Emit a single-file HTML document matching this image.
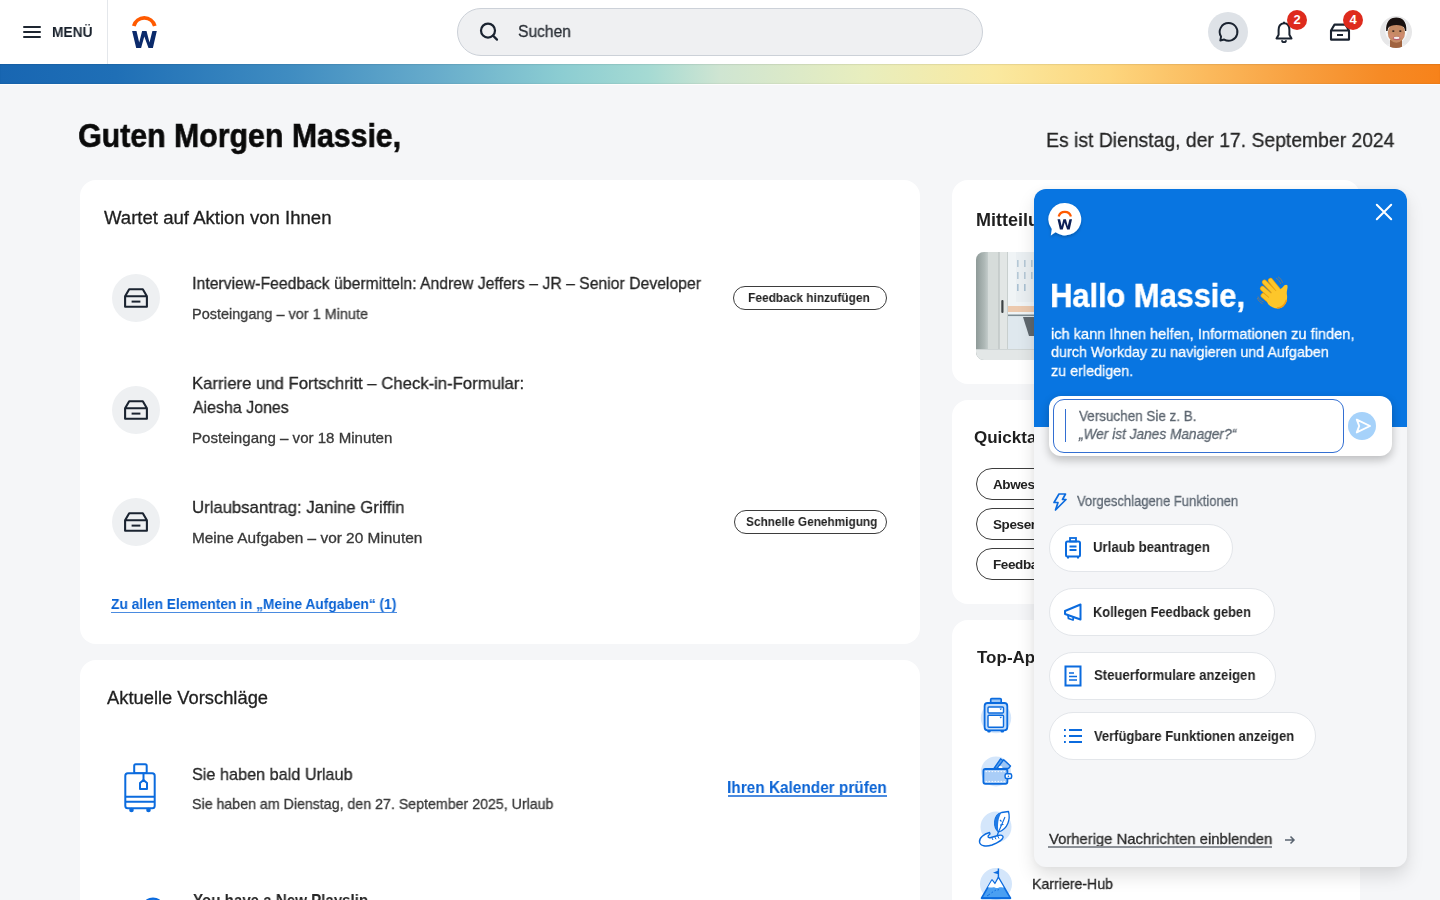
<!DOCTYPE html>
<html><head><meta charset="utf-8"><title>Workday</title>
<style>
*{margin:0;padding:0;box-sizing:border-box}
html,body{width:1440px;height:900px;overflow:hidden;background:#f5f6f8;font-family:"Liberation Sans",sans-serif}
.t{position:absolute;white-space:nowrap;will-change:transform}
.a{position:absolute}
.card{position:absolute;background:#fff;border-radius:16px}
.ico{position:absolute;border-radius:50%;background:#eef0f2}
.pill{position:absolute;border:1.5px solid #3d3d3d;border-radius:14px;background:#fff}
.sbtn{position:absolute;background:#fff;border:1px solid #e3e6ea;border-radius:24px}
svg{position:absolute;overflow:visible}
</style></head><body>

<div class="a" style="left:0;top:0;width:1440px;height:64px;background:#fff"></div>
<div class="a" style="left:23px;top:26px;width:18px;height:2px;background:#1e2631;border-radius:1px"></div>
<div class="a" style="left:23px;top:31px;width:18px;height:2px;background:#1e2631;border-radius:1px"></div>
<div class="a" style="left:23px;top:36px;width:18px;height:2px;background:#1e2631;border-radius:1px"></div>
<div class="t" style="left:52.4px;top:23px;font-size:14.5px;line-height:18px;color:#18202b;font-weight:700;transform:scaleX(0.9474);transform-origin:0.94px 0;">MENÜ</div>

<div class="a" style="left:107px;top:0;width:1px;height:64px;background:#e4e7eb"></div>
<svg style="left:125px;top:10px" width="40" height="44" viewBox="0 0 40 44">
<path d="M8.8 15.9 A10.9 10.9 0 0 1 29.8 15.9" fill="none" stroke="#ff5a00" stroke-width="3.8"/>
<path d="M7.1 21 L11.5 21 L14.2 32.5 L17.1 21 L21.5 21 L24.5 32.5 L27.4 21 L31.8 21 L27.9 37.9 L23.5 37.9 L19.3 26.5 L16.1 37.9 L11.2 37.9 Z" fill="#0b2a6b"/>
</svg>
<div class="a" style="left:457px;top:8px;width:526px;height:48px;background:#eff0f2;border:1px solid #ccd1d8;border-radius:24px"></div>
<svg style="left:478px;top:21px" width="22" height="22" viewBox="0 0 22 22">
<circle cx="10" cy="9.6" r="7" fill="none" stroke="#1a2330" stroke-width="2.2"/>
<path d="M15 14.6 L19 18.6" stroke="#1a2330" stroke-width="2.2" stroke-linecap="round"/>
</svg>
<div class="t" style="left:518.3px;top:22px;font-size:16px;line-height:20px;color:#2a2f36;-webkit-text-stroke:0.3px #2a2f36;transform:scaleX(0.9754);transform-origin:0.72px 0;">Suchen</div>

<div class="a" style="left:1208px;top:12px;width:40px;height:40px;border-radius:50%;background:#dee2e7"></div>
<svg style="left:1216px;top:20px" width="24" height="24" viewBox="0 0 24 24">
<g transform="translate(12.6,12) scale(0.92) translate(-12,-12)"><path d="M12 2.3 A9.6 9.6 0 1 1 7.2 20.2 L3 21.2 L3.8 17 A9.6 9.6 0 0 1 12 2.3 Z" fill="none" stroke="#1a2330" stroke-width="2.1" stroke-linejoin="round"/></g>
</svg>
<svg style="left:1272px;top:20px" width="24" height="24" viewBox="0 0 24 24">
<path d="M12 3.2 C8 3.2 6.6 6.6 6.6 10 L6.6 14.8 L4.5 18.4 L19.5 18.4 L17.4 14.8 L17.4 10 C17.4 6.6 16 3.2 12 3.2 Z" fill="none" stroke="#1a2330" stroke-width="2" stroke-linejoin="round"/>
<path d="M10 20.2 A2 2 0 0 0 14 20.2" fill="none" stroke="#1a2330" stroke-width="1.8"/>
<path d="M12 1.8 L12 3.4" stroke="#1a2330" stroke-width="2"/>
</svg>
<div class="a" style="left:1287px;top:10px;width:20px;height:20px;border-radius:50%;background:#de2b1d;color:#fff;font-weight:700;font-size:13px;line-height:20px;text-align:center">2</div>
<svg style="left:1328px;top:21px" width="24" height="22" viewBox="0 0 24 22">
<path d="M3 9.5 L6.5 3.6 L17.5 3.6 L21 9.5 Z M3 9.5 L3 18.6 L21 18.6 L21 9.5" fill="none" stroke="#1a2330" stroke-width="2.1" stroke-linejoin="round"/>
<path d="M9 14 L15 14" stroke="#1a2330" stroke-width="2"/>
</svg>
<div class="a" style="left:1343px;top:10px;width:20px;height:20px;border-radius:50%;background:#de2b1d;color:#fff;font-weight:700;font-size:13px;line-height:20px;text-align:center">4</div>
<svg style="left:1380px;top:16px" width="32" height="32" viewBox="0 0 32 32">
<defs><clipPath id="av"><circle cx="16" cy="16" r="16"/></clipPath></defs>
<g clip-path="url(#av)">
<rect width="32" height="32" fill="#e7e7e8"/>
<ellipse cx="16.3" cy="14" rx="11.2" ry="13" fill="#f6f7f8"/>
<path d="M3 34 C5 28 10 27 16 27 C22 27 27 28 29 34 Z" fill="#eeeeef"/>
<rect x="10" y="24" width="12" height="9" fill="#a0633f"/>
<path d="M6.2 15 C5.5 6 10 1.6 16.3 1.6 C22.6 1.6 27 6 26.3 15 L25 15 C24 9 22 7 16.3 7 C10.5 7 8.5 9 7.5 15 Z" fill="#1a1210"/>
<ellipse cx="16.4" cy="16.8" rx="8.6" ry="10" fill="#c58a64"/>
<path d="M8 12 C8.5 5.5 12 4.2 16.3 4.2 C20.6 4.2 24 5.5 24.6 12 C22 8 11 8 8 12 Z" fill="#1a1210"/>
<circle cx="11.3" cy="19.5" r="2.6" fill="#d98a78" opacity="0.45"/><circle cx="21.6" cy="19.5" r="2.6" fill="#d98a78" opacity="0.45"/>
<ellipse cx="13.3" cy="15.1" rx="1.2" ry="0.9" fill="#3a2620"/><ellipse cx="20.3" cy="15.1" rx="1.2" ry="0.9" fill="#3a2620"/>
<ellipse cx="16.6" cy="22.3" rx="3.8" ry="1.9" fill="#b8606e"/>
<ellipse cx="16.6" cy="21.9" rx="3" ry="1.1" fill="#f6f0f0"/>
</g></svg>
<div class="a" style="left:0;top:64px;width:1440px;height:20px;background:linear-gradient(90deg,#1866b2 0%,#1f6fb6 8%,#3f8cc1 20%,#66abcb 30%,#8ccdd2 39%,#a5dad3 45%,#cfe5d2 50%,#e8eebe 60%,#fae9a0 69%,#fdd67e 77%,#fbb95c 84%,#f8a040 90%,#f68a25 96%,#f7821a 100%);box-shadow:inset 0 1px 1px rgba(0,0,0,0.08),inset 0 -1px 1px rgba(0,0,0,0.05)"></div>
<div class="a" style="left:0;top:84px;width:1440px;height:1px;background:#fdfdfc"></div>
<div class="t" style="left:77.8px;top:114px;font-size:34px;line-height:42px;color:#0a0a0a;font-weight:700;transform:scaleX(0.8904);transform-origin:1.36px 0;-webkit-text-stroke:0.6px #0a0a0a;">Guten Morgen Massie,</div>

<div class="t" style="left:1045.8px;top:127px;font-size:21px;line-height:26px;color:#262626;-webkit-text-stroke:0.3px #262626;transform:scaleX(0.9210);transform-origin:1.68px 0;">Es ist Dienstag, der 17. September 2024</div>

<div class="card" style="left:80px;top:180px;width:840px;height:464px"></div>
<div class="t" style="left:104.4px;top:207px;font-size:18px;line-height:22px;color:#1f1f1f;-webkit-text-stroke:0.3px #1f1f1f;transform:scaleX(1.0320);transform-origin:0.09px 0;">Wartet auf Aktion von Ihnen</div>

<div class="ico" style="left:112px;top:274px;width:48px;height:48px"></div>
<svg style="left:124px;top:288px" width="24" height="20" viewBox="0 0 24 20">
<path d="M1.1 8.3 L5.2 1.2 L18.8 1.2 L22.9 8.3 Z M1.1 8.3 L1.1 18.8 L22.9 18.8 L22.9 8.3" fill="none" stroke="#1a2330" stroke-width="2.1" stroke-linejoin="round"/>
<path d="M7.6 13.6 L16.4 13.6" stroke="#1a2330" stroke-width="2"/>
</svg>
<div class="ico" style="left:112px;top:386px;width:48px;height:48px"></div>
<svg style="left:124px;top:400px" width="24" height="20" viewBox="0 0 24 20">
<path d="M1.1 8.3 L5.2 1.2 L18.8 1.2 L22.9 8.3 Z M1.1 8.3 L1.1 18.8 L22.9 18.8 L22.9 8.3" fill="none" stroke="#1a2330" stroke-width="2.1" stroke-linejoin="round"/>
<path d="M7.6 13.6 L16.4 13.6" stroke="#1a2330" stroke-width="2"/>
</svg>
<div class="ico" style="left:112px;top:498px;width:48px;height:48px"></div>
<svg style="left:124px;top:512px" width="24" height="20" viewBox="0 0 24 20">
<path d="M1.1 8.3 L5.2 1.2 L18.8 1.2 L22.9 8.3 Z M1.1 8.3 L1.1 18.8 L22.9 18.8 L22.9 8.3" fill="none" stroke="#1a2330" stroke-width="2.1" stroke-linejoin="round"/>
<path d="M7.6 13.6 L16.4 13.6" stroke="#1a2330" stroke-width="2"/>
</svg>
<div class="t" style="left:192.0px;top:273px;font-size:17px;line-height:21px;color:#262626;-webkit-text-stroke:0.3px #262626;transform:scaleX(0.9275);transform-origin:1.53px 0;">Interview-Feedback übermitteln: Andrew Jeffers – JR – Senior Developer</div>

<div class="t" style="left:192.3px;top:305px;font-size:14.5px;line-height:18px;color:#393939;-webkit-text-stroke:0.3px #393939;transform:scaleX(0.9971);transform-origin:1.16px 0;">Posteingang – vor 1 Minute</div>

<div class="t" style="left:192.1px;top:373px;font-size:17px;line-height:21px;color:#262626;-webkit-text-stroke:0.3px #262626;transform:scaleX(0.9819);transform-origin:1.36px 0;">Karriere und Fortschritt – Check-in-Formular:</div>

<div class="t" style="left:192.8px;top:397px;font-size:17px;line-height:21px;color:#262626;-webkit-text-stroke:0.3px #262626;transform:scaleX(0.9382);transform-origin:0.00px 0;">Aiesha Jones</div>

<div class="t" style="left:192.3px;top:429px;font-size:14.5px;line-height:18px;color:#393939;-webkit-text-stroke:0.3px #393939;transform:scaleX(1.0402);transform-origin:1.16px 0;">Posteingang – vor 18 Minuten</div>

<div class="t" style="left:192.2px;top:497px;font-size:17px;line-height:21px;color:#262626;-webkit-text-stroke:0.3px #262626;transform:scaleX(0.9837);transform-origin:1.27px 0;">Urlaubsantrag: Janine Griffin</div>

<div class="t" style="left:192.3px;top:529px;font-size:14.5px;line-height:18px;color:#393939;-webkit-text-stroke:0.3px #393939;transform:scaleX(1.0627);transform-origin:1.16px 0;">Meine Aufgaben – vor 20 Minuten</div>

<div class="pill" style="left:733px;top:286px;width:154px;height:24px"></div>
<div class="t" style="left:747.7px;top:290px;font-size:13px;line-height:16px;color:#222;font-weight:700;transform:scaleX(0.9157);transform-origin:0.84px 0;">Feedback hinzufügen</div>

<div class="pill" style="left:734px;top:510px;width:153px;height:24px"></div>
<div class="t" style="left:745.6px;top:514px;font-size:13px;line-height:16px;color:#222;font-weight:700;transform:scaleX(0.9091);transform-origin:0.39px 0;">Schnelle Genehmigung</div>

<div class="t" style="left:111.0px;top:594px;font-size:15px;line-height:19px;color:#0a63d4;font-weight:700;transform:scaleX(0.9168);transform-origin:0.45px 0;">Zu allen Elementen in „Meine Aufgaben“ (1)</div>

<div class="a" style="left:111px;top:611.5px;width:286px;height:1px;background:#4a8be0"></div>
<div class="card" style="left:80px;top:660px;width:840px;height:300px"></div>
<div class="t" style="left:107.2px;top:687px;font-size:18px;line-height:22px;color:#1f1f1f;-webkit-text-stroke:0.3px #1f1f1f;transform:scaleX(1.0186);transform-origin:0.00px 0;">Aktuelle Vorschläge</div>

<svg style="left:123px;top:762px" width="34" height="52" viewBox="0 0 34 52">
<rect x="11.2" y="2.2" width="12.5" height="9" rx="1.5" fill="none" stroke="#0b6bde" stroke-width="2"/>
<rect x="2.3" y="11.3" width="29.4" height="35" rx="2.5" fill="#fff" stroke="#0b6bde" stroke-width="2"/>
<path d="M2.3 34.7 L31.7 34.7 M2.3 39.7 L31.7 39.7" stroke="#0b6bde" stroke-width="2"/>
<path d="M20.5 11.3 L20.5 18" stroke="#0b6bde" stroke-width="2"/>
<path d="M17 27 L17 21 L20.5 18 L24 21 L24 27 Z" fill="none" stroke="#0b6bde" stroke-width="2" stroke-linejoin="round"/>
<circle cx="8.5" cy="48" r="2.3" fill="#0b6bde"/><circle cx="25.5" cy="48" r="2.3" fill="#0b6bde"/>
</svg>
<div class="t" style="left:191.7px;top:764px;font-size:17px;line-height:21px;color:#262626;-webkit-text-stroke:0.3px #262626;transform:scaleX(0.9546);transform-origin:0.77px 0;">Sie haben bald Urlaub</div>

<div class="t" style="left:191.8px;top:795px;font-size:14.5px;line-height:18px;color:#393939;-webkit-text-stroke:0.3px #393939;transform:scaleX(0.9790);transform-origin:0.65px 0;">Sie haben am Dienstag, den 27. September 2025, Urlaub</div>

<div class="t" style="left:727.4px;top:777px;font-size:16.5px;line-height:21px;color:#0a63d4;font-weight:700;transform:scaleX(0.9317);transform-origin:1.07px 0;">Ihren Kalender prüfen</div>

<div class="a" style="left:728px;top:795px;width:159px;height:1.5px;background:#4a8be0"></div>
<svg style="left:141px;top:893px" width="24" height="20" viewBox="0 0 24 20">
<path d="M3 12 A9.5 9.5 0 0 1 21 12" fill="none" stroke="#0b6bde" stroke-width="2.2"/>
<path d="M4.5 12.5 A7 7 0 0 1 17.5 11" fill="none" stroke="#0b6bde" stroke-width="2"/>
<ellipse cx="10" cy="10.5" rx="3" ry="1.6" fill="#0b6bde"/>
</svg>
<div class="t" style="left:193.2px;top:890px;font-size:17px;line-height:21px;color:#262626;font-weight:700;transform:scaleX(0.8882);transform-origin:0.34px 0;">You have a New Playslip</div>

<div class="card" style="left:952px;top:180px;width:408px;height:204px"></div>
<div class="t" style="left:976.3px;top:209px;font-size:18px;line-height:22px;color:#1f1f1f;font-weight:700;">Mitteilungen</div>

<svg style="left:976px;top:252px" width="140" height="108" viewBox="0 0 140 108">
<defs><clipPath id="imc"><rect width="140" height="108" rx="8"/></clipPath>
<linearGradient id="wallg" x1="0" x2="1" y1="0" y2="0"><stop offset="0" stop-color="#8e9a98"/><stop offset="0.7" stop-color="#afb9b7"/><stop offset="1" stop-color="#c4cccb"/></linearGradient></defs>
<g clip-path="url(#imc)">
<rect width="140" height="108" fill="#eef2f4"/>
<rect x="0" y="0" width="12" height="108" fill="url(#wallg)"/>
<rect x="12" y="0" width="10.5" height="108" fill="#d6dcda"/>
<rect x="22.5" y="0" width="1.2" height="108" fill="#aab2b0"/>
<rect x="23.7" y="0" width="7.5" height="108" fill="#e2e6e5"/>
<rect x="31" y="0" width="1" height="108" fill="#c8cfce"/>
<rect x="32" y="0" width="108" height="97" fill="#f0f4f6"/>
<rect x="40" y="0" width="20" height="50" fill="#eaeff2"/>
<rect x="41" y="8" width="1.6" height="7" fill="#b5c8d6"/><rect x="48" y="8" width="1.6" height="7" fill="#b5c8d6"/><rect x="55" y="8" width="1.6" height="7" fill="#b5c8d6"/>
<rect x="41" y="20" width="1.6" height="7" fill="#b5c8d6"/><rect x="48" y="20" width="1.6" height="7" fill="#b5c8d6"/><rect x="55" y="20" width="1.6" height="7" fill="#b5c8d6"/>
<rect x="41" y="32" width="1.6" height="7" fill="#a9c0d2"/><rect x="48" y="32" width="1.6" height="7" fill="#a9c0d2"/>
<rect x="32" y="54" width="40" height="6" fill="#ecc9ae"/>
<rect x="32" y="62.5" width="40" height="1.8" fill="#7c8b93"/>
<rect x="32" y="64.3" width="40" height="33" fill="#dfe8ee"/>
<path d="M47 65 L58 65 L58 84 L53 84 Z" fill="#5f686f"/>
<rect x="25.3" y="48" width="2.2" height="13" rx="1" fill="#3d4245"/>
<rect x="0" y="97" width="140" height="11" fill="#e3e7e7"/>
<rect x="0" y="97" width="140" height="1" fill="#cfd5d5"/>
</g></svg>
<div class="card" style="left:952px;top:400px;width:408px;height:204px"></div>
<div class="t" style="left:974.3px;top:427px;font-size:17px;line-height:21px;color:#1f1f1f;font-weight:700;">Quicktasks</div>

<div class="a" style="left:976px;top:468px;width:200px;height:31.5px;border:1.5px solid #3d3d3d;border-radius:16px"></div>
<div class="t" style="left:993.2px;top:476px;font-size:13.5px;line-height:17px;color:#222;font-weight:700;letter-spacing:-0.400px;">Abwesenheit anfragen</div>

<div class="a" style="left:976px;top:508px;width:200px;height:31.5px;border:1.5px solid #3d3d3d;border-radius:16px"></div>
<div class="t" style="left:993.1px;top:516px;font-size:13.5px;line-height:17px;color:#222;font-weight:700;letter-spacing:-0.400px;">Spesenabrechnung erstellen</div>

<div class="a" style="left:976px;top:548px;width:200px;height:31.5px;border:1.5px solid #3d3d3d;border-radius:16px"></div>
<div class="t" style="left:992.6px;top:556px;font-size:13.5px;line-height:17px;color:#222;font-weight:700;letter-spacing:-0.400px;">Feedback geben</div>

<div class="card" style="left:952px;top:620px;width:408px;height:300px"></div>
<div class="t" style="left:977.3px;top:647px;font-size:17px;line-height:21px;color:#1f1f1f;font-weight:700;">Top-Apps</div>

<svg style="left:974px;top:692px" width="44" height="100" viewBox="0 0 44 100">
<circle cx="22" cy="26" r="15.2" fill="#d4e6fb"/>
<rect x="16.7" y="6.6" width="10.5" height="4.8" rx="1" fill="#9cc6f5" stroke="#0b6bde" stroke-width="1.7"/>
<rect x="10.6" y="11" width="22.7" height="27.3" rx="3" fill="#c3ddfb" stroke="#0b6bde" stroke-width="1.8"/>
<rect x="14" y="15" width="15.5" height="6" rx="1" fill="#fff" stroke="#0b6bde" stroke-width="1.4"/>
<rect x="14" y="23.3" width="15.5" height="12" rx="1" fill="#fff" stroke="#0b6bde" stroke-width="1.4"/>
<path d="M25.5 16.5 L28 16.5 L26.8 18.3 Z M25.5 24.8 L28 24.8 L26.8 26.6 Z" fill="#0b6bde"/>
<rect x="13.3" y="38" width="3.4" height="2.6" rx="1" fill="#0b6bde"/><rect x="26.6" y="38" width="3.4" height="2.6" rx="1" fill="#0b6bde"/>
<circle cx="22" cy="79.4" r="15" fill="#d4e6fb"/>
<path d="M20 76.5 L26.6 66.8 L34 72.5 L31 76.5 Z" fill="#5aa2ee" stroke="#0b6bde" stroke-width="1.4" stroke-linejoin="round"/>
<path d="M23 76.5 L29.6 67.8 L36.5 74 L34.5 76.5 Z" fill="#9cc6f5" stroke="#0b6bde" stroke-width="1.4" stroke-linejoin="round"/>
<circle cx="26.5" cy="76" r="2" fill="#fff"/>
<rect x="9.4" y="77" width="24" height="14.8" rx="2" fill="#a9cdf7" stroke="#0b6bde" stroke-width="1.8"/>
<path d="M11.5 79.6 L31.5 79.6 M11.5 89.4 L31.5 89.4" stroke="#fff" stroke-width="0.9" stroke-dasharray="1.6 1.4"/>
<rect x="31.1" y="81.8" width="6.5" height="4.8" rx="1.5" fill="#fff" stroke="#0b6bde" stroke-width="1.5"/>
<circle cx="34.4" cy="84.2" r="0.8" fill="#0b6bde"/>
</svg>
<svg style="left:974px;top:805px" width="44" height="45" viewBox="0 0 44 45">
<circle cx="22" cy="22" r="15.5" fill="#d4e6fb"/>
<path d="M24.5 27 C19 22 19 10 27.5 7.5 L34.5 6.5 C36.5 14 34 24 24.5 27 Z" fill="#fff" stroke="#0b6bde" stroke-width="1.3" stroke-linejoin="round"/>
<path d="M24.5 27 C19 22 19 10 27.5 7.5 C24 13 23.5 20 24.5 27 Z" fill="#1f7ae6"/>
<path d="M24.5 27 L31 12 M26 20 L29.5 19.5 M27.5 16.5 L26 15" stroke="#0b6bde" stroke-width="1.1" fill="none"/>
<path d="M24.5 27 L23 31" stroke="#0b6bde" stroke-width="1.3"/>
<path d="M15.5 27.5 C10 29 5 33 5.5 37 C6 41 12 42 18 40 C23 38 28 36 29 32.5 C29.5 30.5 27 29.5 24 30.5 L17 32.5 C13.5 33.5 13 31 16 29 Z" fill="#fff" stroke="#0b6bde" stroke-width="1.4" stroke-linejoin="round"/>
<path d="M17.5 32 L19 35 M20.5 31.3 L22 34.3 M23.5 30.6 L25 33.6" stroke="#0b6bde" stroke-width="1" fill="none"/>
</svg>
<svg style="left:974px;top:856px" width="44" height="44" viewBox="0 0 44 44">
<circle cx="22" cy="28" r="16" fill="#d4e6fb"/>
<path d="M7.5 42.2 L18 24 L21 27.8 L24.4 21.5 L36.5 42.2 Z" fill="#4a9ff2" stroke="#0b6bde" stroke-width="1.6" stroke-linejoin="round"/>
<path d="M13.9 31.3 L18 24.6 L21 28.4 L24.4 22.4 L29.8 31.4 C28 31.8 26.5 30.8 24.5 31.8 C22.5 32.8 20.5 30.8 18.5 31.4 C16.8 31.9 15.5 31.3 13.9 31.3 Z" fill="#fff"/>
<path d="M24.4 21.5 L24.4 12.5" stroke="#0b6bde" stroke-width="1.4"/>
<path d="M24.4 14.5 L19 16.8 L24.4 18.2 Z" fill="#0b6bde"/>
<path d="M13 40 L16 38 M17.5 36.8 L19 35.8 M20.5 34.8 L22 34 M23.5 34 L25 33.6" stroke="#0b6bde" stroke-width="0.9"/>
<path d="M7.5 42.2 L36.5 42.2" stroke="#0b6bde" stroke-width="2"/>
</svg>
<div class="t" style="left:1032.0px;top:874px;font-size:15px;line-height:19px;color:#262626;-webkit-text-stroke:0.3px #262626;transform:scaleX(0.9423);transform-origin:1.20px 0;">Karriere-Hub</div>

<div class="a" style="left:1034px;top:189px;width:373px;height:678px;border-radius:12px;background:#f5f6f8;box-shadow:0 9px 18px rgba(0,0,0,0.12),0 0 8px rgba(0,0,0,0.05);overflow:hidden">
<div class="a" style="left:0;top:0;width:373px;height:238px;background:#0875e1"></div>
</div>
<svg style="left:1376px;top:204px" width="16" height="16" viewBox="0 0 16 16">
<path d="M0.8 0.8 L15.2 15.2 M15.2 0.8 L0.8 15.2" stroke="#fff" stroke-width="2" stroke-linecap="round"/>
</svg>
<svg style="left:1046px;top:201px" width="38" height="38" viewBox="0 0 38 38">
<defs><filter id="sh" x="-30%" y="-30%" width="160%" height="160%"><feDropShadow dx="0" dy="1.5" stdDeviation="1.5" flood-color="#000" flood-opacity="0.25"/></filter></defs>
<path d="M19 2 A16.2 16.2 0 1 1 9.5 31.3 L4.8 34.5 L5.8 28 A16.2 16.2 0 0 1 19 2 Z" fill="#fff" filter="url(#sh)"/>
<g transform="translate(11.5,9.6) scale(0.584) translate(-6.8,-5.9)"><path d="M8.8 15.9 A10.9 10.9 0 0 1 29.8 15.9" fill="none" stroke="#ff5a00" stroke-width="3.8"/></g>
<g transform="translate(11.5,18.2) scale(0.587,0.604) translate(-7.1,-21)"><path d="M7.1 21 L11.5 21 L14.2 32.5 L17.1 21 L21.5 21 L24.5 32.5 L27.4 21 L31.8 21 L27.9 37.9 L23.5 37.9 L19.3 26.5 L16.1 37.9 L11.2 37.9 Z" fill="#0c1f55"/></g>
</svg>
<div class="t" style="left:1050.3px;top:274px;font-size:34px;line-height:42px;color:#fff;font-weight:700;transform:scaleX(0.9042);transform-origin:2.21px 0;-webkit-text-stroke:0.5px #fff;">Hallo Massie,</div>

<svg style="left:1240px;top:270px" width="60" height="50" viewBox="0 0 60 50">
<g stroke-linecap="round">
<path d="M24.5 12.2 L35 23 M30.6 10.6 L39 21 M22.6 18.6 L33 28 M23.2 25.6 L32 33" stroke="#e8a010" stroke-width="5.2"/>
<path d="M24.5 12.2 L35 23 M30.6 10.6 L39 21 M22.6 18.6 L33 28 M23.2 25.6 L32 33" stroke="#fdc62a" stroke-width="3.8"/>
</g>
<path d="M27 31 L32 22 L39 20.5 L43 17 C44.5 14.5 46.5 14 47.5 15.5 C48 18 46.5 21 46.8 24 C48 29 46 35 42 37.5 C37 40 32 38 28 34 Z" fill="#fdc62a"/>
<path d="M37 38 C41 38 45 35 46.5 30" stroke="#f39a12" stroke-width="1.6" fill="none"/>
<path d="M36 8 C38.5 9.5 40 11.5 40.8 14 M38 6.8 C40.5 8.2 42 10.5 42.6 12.8" stroke="#7d7a72" stroke-width="0.9" fill="none"/>
<path d="M17.3 28 C18.3 30.5 20 32.5 22.6 33.8 M17.8 26.5 C19 29 20.6 30.8 23.5 32" stroke="#7d7a72" stroke-width="0.9" fill="none"/>
</svg>
<div class="t" style="left:1050.5px;top:324px;font-size:15px;line-height:19px;color:#fff;-webkit-text-stroke:0.3px #fff;transform:scaleX(0.9729);transform-origin:0.97px 0;">ich kann Ihnen helfen, Informationen zu finden,</div>

<div class="t" style="left:1050.9px;top:342px;font-size:15px;line-height:19px;color:#fff;-webkit-text-stroke:0.3px #fff;transform:scaleX(0.9552);transform-origin:0.60px 0;">durch Workday zu navigieren und Aufgaben</div>

<div class="t" style="left:1050.9px;top:361px;font-size:15px;line-height:19px;color:#fff;-webkit-text-stroke:0.3px #fff;transform:scaleX(0.9559);transform-origin:0.60px 0;">zu erledigen.</div>

<div class="a" style="left:1049px;top:396px;width:343px;height:60px;background:#fff;border-radius:12px;box-shadow:0 4px 10px rgba(0,0,0,0.24)"></div>
<div class="a" style="left:1053px;top:399px;width:291px;height:54px;border:1.6px solid #336fd2;border-radius:11px"></div>
<div class="a" style="left:1065px;top:409px;width:1.2px;height:33px;background:#336fd2"></div>
<div class="t" style="left:1079.4px;top:407px;font-size:14.5px;line-height:18px;color:#5d6670;-webkit-text-stroke:0.3px #5d6670;transform:scaleX(0.9287);transform-origin:0.07px 0;">Versuchen Sie z. B.</div>

<div class="t" style="left:1079.0px;top:425px;font-size:14.5px;line-height:18px;color:#5d6670;-webkit-text-stroke:0.3px #5d6670;font-style:italic;transform:scaleX(0.9435);transform-origin:-0.51px 0;">„Wer ist Janes Manager?“</div>

<svg style="left:1348px;top:412px" width="28" height="28" viewBox="0 0 28 28">
<circle cx="14" cy="14" r="14" fill="#a6d2fa"/>
<path d="M8.8 7.6 L22 14 L8.8 20.4 L11.2 14 Z" fill="none" stroke="#fff" stroke-width="1.9" stroke-linejoin="round"/>
</svg>
<svg style="left:1052px;top:493px" width="16" height="18" viewBox="0 0 16 18">
<path d="M7 1 L13.5 1 L10.5 6.5 L14 6.5 L3.5 17 L6 9.5 L2 9.5 Z" fill="none" stroke="#0b6bde" stroke-width="1.7" stroke-linejoin="round"/>
</svg>
<div class="t" style="left:1077.0px;top:492px;font-size:14px;line-height:18px;color:#5e6873;-webkit-text-stroke:0.3px #5e6873;transform:scaleX(0.9283);transform-origin:0.07px 0;">Vorgeschlagene Funktionen</div>

<div class="sbtn" style="left:1049px;top:524px;width:183.8px;height:47.5px"></div>
<div class="t" style="left:1093.4px;top:538px;font-size:14px;line-height:18px;color:#1f1f1f;font-weight:700;transform:scaleX(0.9443);transform-origin:0.84px 0;">Urlaub beantragen</div>

<div class="sbtn" style="left:1049px;top:588.3px;width:226.3px;height:47.5px"></div>
<div class="t" style="left:1092.6px;top:603px;font-size:14px;line-height:18px;color:#1f1f1f;font-weight:700;transform:scaleX(0.9137);transform-origin:0.91px 0;">Kollegen Feedback geben</div>

<div class="sbtn" style="left:1049px;top:652.2px;width:227px;height:47.5px"></div>
<div class="t" style="left:1093.8px;top:666px;font-size:14px;line-height:18px;color:#1f1f1f;font-weight:700;transform:scaleX(0.9387);transform-origin:0.42px 0;">Steuerformulare anzeigen</div>

<div class="sbtn" style="left:1049px;top:712.3px;width:267.4px;height:47.5px"></div>
<div class="t" style="left:1094.4px;top:727px;font-size:14px;line-height:18px;color:#1f1f1f;font-weight:700;transform:scaleX(0.9251);transform-origin:0.07px 0;">Verfügbare Funktionen anzeigen</div>

<svg style="left:1063px;top:537px" width="20" height="22" viewBox="0 0 20 22">
<rect x="7" y="1" width="6" height="3.5" fill="none" stroke="#0b6bde" stroke-width="1.8"/>
<rect x="3" y="4.5" width="14" height="15" rx="1.5" fill="none" stroke="#0b6bde" stroke-width="2"/>
<path d="M6.5 9.5 L13.5 9.5 M6.5 13 L13.5 13" stroke="#0b6bde" stroke-width="1.8"/>
<path d="M5 20 L5 21.5 M15 20 L15 21.5" stroke="#0b6bde" stroke-width="2"/>
</svg>
<svg style="left:1063px;top:602px" width="20" height="20" viewBox="0 0 20 20">
<path d="M2 9 L17.5 2.5 L17.5 17.5 L2 12 Z" fill="none" stroke="#0b6bde" stroke-width="2" stroke-linejoin="round"/>
<path d="M5 13 L5.5 16.5 L10 18 L10.5 14.5" fill="none" stroke="#0b6bde" stroke-width="1.8" stroke-linejoin="round"/>
</svg>
<svg style="left:1063px;top:665px" width="20" height="22" viewBox="0 0 20 22">
<path d="M2.5 1.5 L17.5 1.5 L17.5 20.5 L2.5 20.5 Z" fill="none" stroke="#0b6bde" stroke-width="2"/>
<path d="M6 8 L11 8 M6 11.5 L14 11.5 M6 15 L14 15" stroke="#0b6bde" stroke-width="1.6"/>
</svg>
<svg style="left:1063px;top:728px" width="20" height="16" viewBox="0 0 20 16">
<path d="M1 2 L2.8 2 M1 8 L2.8 8 M1 14 L2.8 14" stroke="#0b6bde" stroke-width="1.8"/>
<path d="M6 2 L19 2 M6 8 L19 8 M6 14 L19 14" stroke="#0b6bde" stroke-width="1.8"/>
</svg>
<div class="t" style="left:1048.7px;top:829px;font-size:15px;line-height:19px;color:#2a2a2a;-webkit-text-stroke:0.3px #2a2a2a;transform:scaleX(0.9879);transform-origin:0.07px 0;">Vorherige Nachrichten einblenden</div>

<div class="a" style="left:1048px;top:846.3px;width:224px;height:1.6px;background:#8b9097"></div>
<svg style="left:1284px;top:835px" width="12" height="10" viewBox="0 0 12 10">
<path d="M1 5 L10 5 M6.5 1.5 L10 5 L6.5 8.5" fill="none" stroke="#5a6470" stroke-width="1.5"/>
</svg>
</body></html>
